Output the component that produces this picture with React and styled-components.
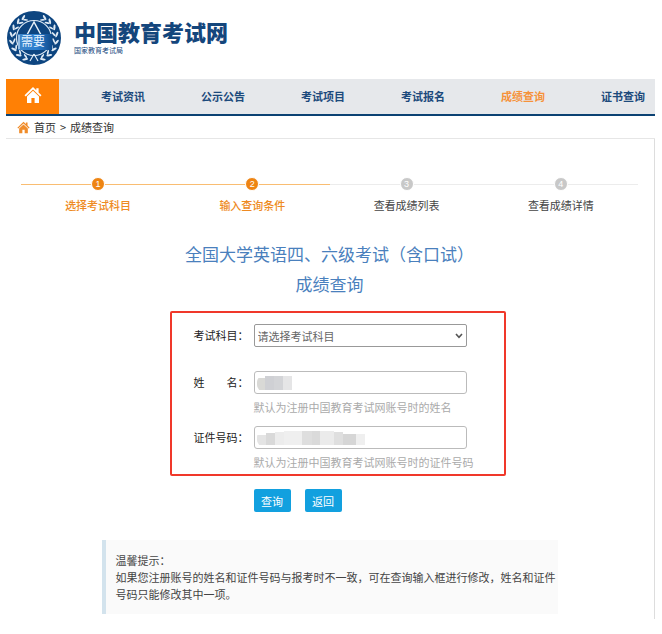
import React from "react";
import styled, { createGlobalStyle } from "styled-components";

const NAV_ITEMS = ["考试资讯", "公示公告", "考试项目", "考试报名", "成绩查询", "证书查询"];

const STEPS = [
  { label: "选择考试科目", state: "done" },
  { label: "输入查询条件", state: "done" },
  { label: "查看成绩列表", state: "todo" },
  { label: "查看成绩详情", state: "todo" },
];

// x, y, width, fill of each masking block
const NAME_MASK = [
  [0, 2, 8, "#d9d9d6"],
  [8, 0, 9, "#cfd0d4"],
  [17, 0, 9, "#d3d4d7"],
  [26, 0, 9, "#e5e5e6"],
];

const ID_MASK = [
  [0, 4, 9, "#e4e4e4"],
  [9, 2, 9, "#d9d9d9"],
  [18, 1, 9, "#ececec"],
  [27, 0, 18, "#efefef"],
  [45, 0, 10, "#dedede"],
  [55, 0, 8, "#dadada"],
  [63, 0, 14, "#ebebeb"],
  [77, 1, 9, "#dfdfdf"],
  [86, 3, 13, "#d6d6d6"],
  [99, 3, 9, "#efefef"],
];

const LEAVES = [200, 219, 238, 257, 276, 295, 314, 330];

const HomeIcon = ({ size, color }) => (
  <svg width={size} height={size} viewBox="0 0 18 18" fill={color} aria-hidden="true">
    <path d="M9 1 0.5 9.2 1.8 10.4 9 3.6 16.2 10.4 17.5 9.2 14.6 6.4V2.2H12.3V4.2Z" />
    <path d="M9 4.8 3 10.4V17H7.4V12H10.6V17H15V10.4Z" />
  </svg>
);

const Leaf = ({ angle }) => (
  <g transform={`rotate(${angle - 85} 28 28)`}>
    <ellipse cx="51" cy="27" rx="1.1" ry="3" transform="rotate(-35 51 27)" />
    <ellipse cx="48" cy="28" rx="0.9" ry="2.6" transform="rotate(30 48 28)" />
  </g>
);

const Emblem = () => (
  <svg width="56" height="56" viewBox="0 0 56 56" aria-hidden="true">
    <defs>
      <linearGradient id="plate" x1="0" x2="1">
        <stop offset="0" stopColor="#3f86c9" />
        <stop offset="0.55" stopColor="#2b7fd0" />
        <stop offset="1" stopColor="#0f4a8a" />
      </linearGradient>
    </defs>
    <circle cx="28" cy="28" r="27" fill="#0d4580" />
    <circle cx="28" cy="28" r="17.5" fill="none" stroke="#dce9f4" strokeWidth="1.2" />
    <g fill="#dfeaf4">
      {LEAVES.map((angle) => (
        <Leaf key={angle} angle={angle} />
      ))}
    </g>
    <g fill="#dfeaf4" transform="translate(56 0) scale(-1 1)">
      {LEAVES.map((angle) => (
        <Leaf key={angle} angle={angle} />
      ))}
    </g>
    <path d="M28 12 15 36H41Z" stroke="#e8f1f8" strokeWidth="1.5" fill="none" />
    <path d="M28 44 24 51M28 44 32 51" stroke="#dfeaf4" strokeWidth="1.2" fill="none" />
    <rect x="12" y="24" width="34" height="16" fill="url(#plate)" />
    <path d="M13 25V39" stroke="#cfe2f3" strokeWidth="1.2" />
    <text
      x="27"
      y="36"
      textAnchor="middle"
      fontSize="12"
      fill="#e6f3ff"
      fontFamily="'Noto Sans CJK SC', sans-serif"
    >
      需要
    </text>
  </svg>
);

const Mask = ({ blocks, width }) => (
  <MaskSvg width={width} height="15" aria-hidden="true">
    {blocks.map(([x, y, w, fill]) => (
      <rect key={x} x={x} y={y} width={w} height={14 - y} fill={fill} />
    ))}
  </MaskSvg>
);

export default function App() {
  return (
    <>
      <GlobalStyle />
      <Page>
        <Header>
          <Emblem />
          <Brand>
            <BrandName>中国教育考试网</BrandName>
            <BrandOwner>国家教育考试局</BrandOwner>
          </Brand>
        </Header>

        <Nav>
          <HomeLink href="#" aria-label="首页">
            <HomeIcon size={18} color="#fff" />
          </HomeLink>
          {NAV_ITEMS.map((item) => (
            <NavLink key={item} href="#" $active={item === "成绩查询"}>
              {item}
            </NavLink>
          ))}
        </Nav>

        <Breadcrumb>
          <HomeIcon size={13} color="#f08c2a" />
          <a href="#">首页</a>
          <span>&gt;</span>
          <a href="#">成绩查询</a>
        </Breadcrumb>

        <Content>
          <Steps>
            {STEPS.map(({ label, state }, i) => (
              <Step key={label} $done={state === "done"}>
                <StepNumber $done={state === "done"}>{i + 1}</StepNumber>
                {label}
              </Step>
            ))}
          </Steps>

          <Title>
            全国大学英语四、六级考试（含口试）
            <br />
            成绩查询
          </Title>

          <Form onSubmit={(e) => e.preventDefault()}>
            <Fields>
              <Label htmlFor="subject">考试科目：</Label>
              <Field>
                <Select id="subject" defaultValue="">
                  <option value="">请选择考试科目</option>
                </Select>
                <Chevron width="8" height="6" viewBox="0 0 8 6" aria-hidden="true">
                  <path d="M1 1 4 4.4 7 1" fill="none" stroke="#555" strokeWidth="1.6" />
                </Chevron>
              </Field>

              <Label htmlFor="name">姓　　名：</Label>
              <Field>
                <Input id="name" type="text" />
                <Mask blocks={NAME_MASK} width={36} />
              </Field>
              <Hint>默认为注册中国教育考试网账号时的姓名</Hint>

              <Label htmlFor="idno">证件号码：</Label>
              <Field>
                <Input id="idno" type="text" />
                <Mask blocks={ID_MASK} width={110} />
              </Field>
              <Hint>默认为注册中国教育考试网账号时的证件号码</Hint>
            </Fields>

            <Actions>
              <Button type="submit">查询</Button>
              <Button type="button">返回</Button>
            </Actions>
          </Form>

          <Notice>
            <p>温馨提示：</p>
            <p>
              如果您注册账号的姓名和证件号码与报考时不一致，可在查询输入框进行修改，姓名和证件号码只能修改其中一项。
            </p>
          </Notice>
        </Content>
      </Page>
    </>
  );
}

const GlobalStyle = createGlobalStyle`
  * {
    box-sizing: border-box;
  }

  body {
    margin: 0;
    background: #fff;
    color: #333;
    font-family: "Noto Sans CJK SC", sans-serif;
    font-size: 11px;
    line-height: 16px;
  }

  a {
    color: inherit;
    text-decoration: none;
  }

  p {
    margin: 0;
  }

  input,
  select,
  button {
    font: inherit;
  }
`;

const Page = styled.div`
  margin: 0 7px 0 6px;
`;

const Header = styled.header`
  display: flex;
  align-items: center;
  gap: 12px;
  height: 79px;
  padding-bottom: 4px;
`;

const Brand = styled.div`
  padding-bottom: 4px;
  color: #14467c;
`;

const BrandName = styled.h1`
  margin: 0;
  font-size: 22px;
  font-weight: 900;
  line-height: 28px;
`;

const BrandOwner = styled.div`
  font-size: 7px;
  line-height: 10px;
`;

const Nav = styled.nav`
  display: flex;
  height: 37px;
  overflow: hidden;
  background: #e6e8eb;
  border-bottom: 2px solid #0b4273;
`;

const HomeLink = styled.a`
  display: flex;
  flex: 0 0 53px;
  align-items: center;
  justify-content: center;
  margin-right: 14px;
  padding-bottom: 4px;
  background: #ff8005;
`;

const NavLink = styled.a`
  flex: 0 0 100px;
  color: ${({ $active }) => ($active ? "#f6923a" : "#1c4a7c")};
  font-weight: 700;
  line-height: 35px;
  text-align: center;
`;

const Breadcrumb = styled.div`
  display: flex;
  align-items: center;
  gap: 4px;
  height: 23px;
  padding-left: 11px;
  border-bottom: 1px solid #e6e6e6;
`;

const Content = styled.main`
  padding: 38px 16px 5px 15px;
  border-right: 1px solid #ddd;
`;

const Steps = styled.ol`
  display: flex;
  margin: 0;
  padding: 0;
  list-style: none;
`;

const Step = styled.li`
  position: relative;
  display: flex;
  flex: 1;
  flex-direction: column;
  align-items: center;
  gap: 6px;
  color: ${({ $done }) => ($done ? "#ee8a22" : "#444")};
  font-weight: ${({ $done }) => ($done ? 500 : 400)};

  &::before {
    content: "";
    position: absolute;
    top: 7px;
    right: 0;
    left: 0;
    height: 1px;
    background: ${({ $done }) => ($done ? "#f9bd72" : "#ececec")};
  }
`;

const StepNumber = styled.span`
  position: relative;
  width: 14px;
  height: 14px;
  border: 1px solid #fff;
  border-radius: 50%;
  background: ${({ $done }) => ($done ? "#ee8412" : "#c8c8c8")};
  color: #fff;
  font-family: "Liberation Sans", Arial, sans-serif;
  font-size: 9px;
  font-weight: 400;
  line-height: 12px;
  text-align: center;
`;

const Title = styled.h2`
  margin: 26px 0 0;
  color: #4a80bd;
  font-size: 17px;
  font-weight: 400;
  line-height: 30px;
  text-align: center;
`;

const Form = styled.form`
  width: 352px;
  margin: 12px auto 0;
  padding-left: 16px;
`;

const Fields = styled.div`
  display: grid;
  grid-template-columns: 60px minmax(0, 1fr);
  padding: 11px 37px 4px 22px;
  border: 2px solid #f0382a;
  border-radius: 2px;
`;

const Label = styled.label`
  color: #222;
  line-height: 23px;
  white-space: pre;
`;

const Field = styled.div`
  position: relative;

  &:nth-child(2) {
    margin-bottom: 24px;
  }
`;

const Input = styled.input`
  display: block;
  width: 100%;
  height: 23px;
  padding: 0 4px;
  border: 1px solid #bbb;
  border-radius: 3px;
  background: #fff;
`;

const Select = styled.select`
  display: block;
  width: 100%;
  height: 23px;
  padding: 0 3px;
  border: 1px solid #999;
  border-radius: 2px;
  background: #fff;
  color: #666;
  appearance: none;
`;

const Chevron = styled.svg`
  position: absolute;
  top: 9px;
  right: 4px;
  pointer-events: none;
`;

const MaskSvg = styled.svg`
  position: absolute;
  top: 5px;
  left: 3px;
  border-radius: 6px 0 0 6px;
  pointer-events: none;
`;

const Hint = styled.p`
  grid-column: 2;
  padding: 5px 0 11px;
  color: #aaa;
  white-space: nowrap;

  &:last-child {
    padding-bottom: 0;
  }
`;

const Actions = styled.div`
  display: flex;
  gap: 14px;
  margin-top: 13px;
  padding-left: 84px;
`;

const Button = styled.button`
  width: 37px;
  height: 23px;
  padding: 0;
  border: 0;
  border-radius: 2px;
  background: #12a0df;
  color: #fff;
`;

const Notice = styled.aside`
  max-width: 456px;
  margin: 28px auto 0;
  padding: 12px 2px 11px 10px;
  border-left: 4px solid #d3e3ed;
  background: #fafafa;
  color: #444;
  line-height: 17px;
`;
